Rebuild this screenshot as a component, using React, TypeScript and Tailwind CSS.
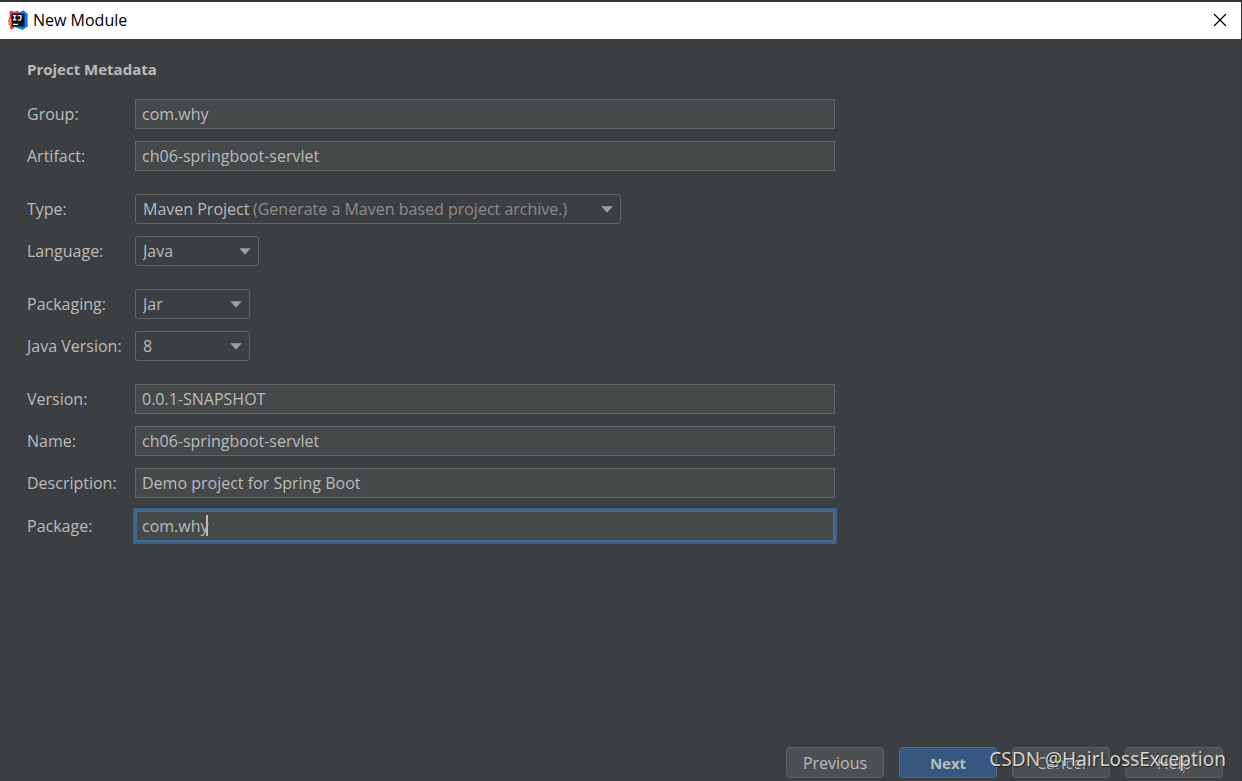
import { useState } from 'react';
import type { ReactNode } from 'react';

interface RowProps {
  id: string;
  label: string;
  children: ReactNode;
}

function Row({ id, label, children }: RowProps) {
  return (
    <div className="flex min-h-[30px] items-center">
      <label htmlFor={id} className="w-[108px] shrink-0">
        {label}
      </label>
      {children}
    </div>
  );
}

interface TextRowProps {
  id: string;
  label: string;
  initial: string;
}

function TextRow({ id, label, initial }: TextRowProps) {
  const [value, setValue] = useState(initial);

  return (
    <Row id={id} label={label}>
      <input
        id={id}
        type="text"
        value={value}
        onChange={(e) => setValue(e.target.value)}
        className="h-[30px] min-w-0 flex-1 border border-[#646464] bg-[#45494a] px-[6px] outline-none focus:ring-2 focus:ring-[#3d6185]"
      />
    </Row>
  );
}

interface SelectRowProps {
  id: string;
  label: string;
  options: string[];
  width: string;
  hint?: string;
}

function SelectRow({ id, label, options, width, hint }: SelectRowProps) {
  return (
    <Row id={id} label={label}>
      <div className={`relative ${width}`}>
        <select
          id={id}
          className="block h-[30px] w-full appearance-none rounded-[3px] border border-[#646464] bg-[#3c3f41] px-[7px] outline-none"
        >
          {options.map((option) => (
            <option key={option}>{option}</option>
          ))}
        </select>
        {hint && (
          <span className="pointer-events-none absolute inset-y-0 left-[118px] flex items-center whitespace-nowrap text-[#8c8c8c]">
            {hint}
          </span>
        )}
        <svg className="pointer-events-none absolute right-2 top-3 h-[7px] w-3" viewBox="0 0 12 7" fill="#9da0a3">
          <path d="M0.3 0.3h11.4L6 6.8z" />
        </svg>
      </div>
    </Row>
  );
}

function IdeaLogo() {
  return (
    <svg className="h-5 w-5" viewBox="0 0 20 20">
      <path d="M0.5 10L2 8l5 6-2 3.5-4.5-2z" fill="#f98b2c" />
      <path d="M1.5 1.5L3.5 0.5 6 2l4-1.5 3 6L5 18l-3 1 1-5L0.3 11l1.5-5z" fill="#f4315f" />
      <path d="M0.5 9.5L4 8.5l1 6-3 1.5-1.5-3z" fill="#fb8d3a" />
      <path d="M10 3l5.5-2.8L19.7 4v12.5L14.5 20 7 17z" fill="#087cfa" />
      <path d="M2.3 16l6 0.5-5 3.3z" fill="#f4315f" />
      <rect x="3.5" y="3.5" width="13" height="13" fill="#111" />
      <path
        d="M5 5.7h3.4M6.7 5.7v4.2M5 9.9h3.4M9.8 5.7h3.1v3.1q0 1.3-1.3 1.3h-1.7M5 14.3h5"
        fill="none"
        stroke="#fff"
        strokeWidth="1.2"
      />
    </svg>
  );
}

function DialogButton({ children }: { children: ReactNode }) {
  return (
    <button
      type="button"
      className="h-[31px] w-[98px] rounded-[4px] border border-[#5e6060] bg-[#4c5052] text-center"
    >
      {children}
    </button>
  );
}

export default function App() {
  return (
    <div className="flex min-h-screen flex-col border-r border-t-2 border-r-[#333536] border-t-[#333333] bg-[#3c3f41] font-['Open_Sans',sans-serif] text-base leading-5 text-[#bbbbbb]">
      {/* Title bar */}
      <header className="flex h-[37px] items-center gap-[5px] bg-white pb-[2px] pl-2 pr-[14px] text-black">
        <IdeaLogo />
        <h1>New Module</h1>
        <button type="button" aria-label="Close" className="ml-auto">
          <svg className="h-[14px] w-[14px]" viewBox="0 0 14 14" fill="none" stroke="#000" strokeWidth="1.2">
            <path d="M1 1l12 12M13 1L1 13" />
          </svg>
        </button>
      </header>

      {/* Form */}
      <main className="flex w-full max-w-[835px] flex-1 flex-col pl-[27px] pt-5">
        <h2 className="mb-5 text-[15px] leading-5 font-bold">Project Metadata</h2>
        <form className="flex flex-col gap-[23px]">
          <div className="flex flex-col gap-3">
            <TextRow id="group" label="Group:" initial="com.why" />
            <TextRow id="artifact" label="Artifact:" initial="ch06-springboot-servlet" />
          </div>
          <div className="flex flex-col gap-3">
            <SelectRow
              id="type"
              label="Type:"
              options={['Maven Project', 'Gradle Project']}
              width="w-[486px]"
              hint="(Generate a Maven based project archive.)"
            />
            <SelectRow id="language" label="Language:" options={['Java', 'Kotlin', 'Groovy']} width="w-[124px]" />
          </div>
          <div className="flex flex-col gap-3">
            <SelectRow id="packaging" label="Packaging:" options={['Jar', 'War']} width="w-[115px]" />
            <SelectRow id="java-version" label="Java Version:" options={['8', '11', '16']} width="w-[115px]" />
          </div>
          <div className="flex flex-col gap-3">
            <TextRow id="version" label="Version:" initial="0.0.1-SNAPSHOT" />
            <TextRow id="name" label="Name:" initial="ch06-springboot-servlet" />
            <TextRow id="description" label="Description:" initial="Demo project for Spring Boot" />
            <Row id="package" label="Package:">
              <div className="relative min-w-0 flex-1">
                <input
                  id="package"
                  type="text"
                  defaultValue="com.why"
                  className="block h-8 w-full border-2 border-[#426a93] bg-[#45494a] px-[5px] caret-transparent outline-none ring-2 ring-[#3d6185]"
                />
                <span className="absolute left-[71px] top-[5px] h-[21px] w-[2px] bg-[#bbbbbb]" />
              </div>
            </Row>
          </div>
        </form>
      </main>

      {/* Wizard buttons */}
      <footer className="relative flex justify-end gap-[15px] pb-[3px] pr-[18px]">
        <DialogButton>Previous</DialogButton>
        <button
          type="button"
          className="h-[31px] w-[98px] rounded-[4px] border border-[#4c708c] bg-[#365880] text-center text-[15px] leading-5 font-bold"
        >
          Next
        </button>
        <DialogButton>Cancel</DialogButton>
        <DialogButton>Help</DialogButton>
        <span className="pointer-events-none absolute right-[15px] top-0 whitespace-nowrap font-['Noto_Sans',sans-serif] text-[19px] leading-6 text-[#d4d4d4] [text-shadow:1px_1px_1px_#222]">
          CSDN @HairLossException
        </span>
      </footer>
    </div>
  );
}
